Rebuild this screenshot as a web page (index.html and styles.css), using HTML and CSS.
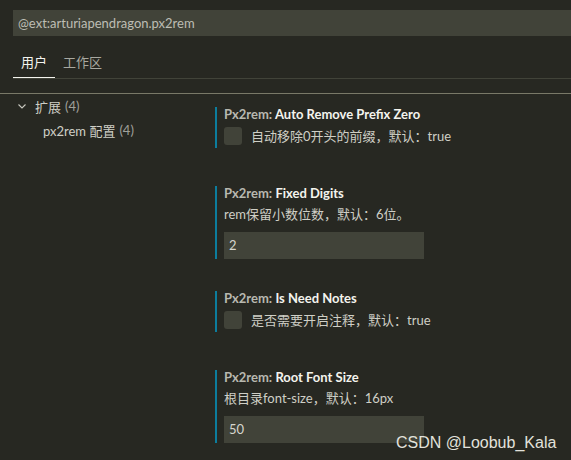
FILE: index.html
```html
<!DOCTYPE html>
<html lang="zh-CN">
<head>
<meta charset="utf-8">
<title>Settings</title>
<link rel="stylesheet" href="styles.css">
</head>
<body>
<div class="page">
  <div class="search">@ext:arturiapendragon.px2rem</div>
  <div class="tabs">
    <div class="tab active">用户</div>
    <div class="tab">工作区</div>
  </div>
  <div class="body">
    <div class="tree">
      <div class="tree-row">
        <svg class="chev" width="16" height="16" viewBox="0 0 16 16"><path d="M4.5 6.5 L8 10 L11.5 6.5" fill="none" stroke="#c8c8c0" stroke-width="1.1"/></svg>
        <span class="tree-label">扩展</span><span class="count">(4)</span>
      </div>
      <div class="tree-row sub">
        <span class="tree-label">px2rem 配置</span><span class="count">(4)</span>
      </div>
    </div>
    <div class="list">
      <div class="setting bool">
        <div class="title"><span class="cat">Px2rem: </span><span class="name">Auto Remove Prefix Zero</span></div>
        <div class="check-row">
          <span class="checkbox"></span>
          <span class="desc">自动移除0开头的前缀，默认：true</span>
        </div>
      </div>
      <div class="setting num">
        <div class="title"><span class="cat">Px2rem: </span><span class="name">Fixed Digits</span></div>
        <div class="desc block">rem保留小数位数，默认：6位。</div>
        <div class="input">2</div>
      </div>
      <div class="setting bool">
        <div class="title"><span class="cat">Px2rem: </span><span class="name">Is Need Notes</span></div>
        <div class="check-row">
          <span class="checkbox"></span>
          <span class="desc">是否需要开启注释，默认：true</span>
        </div>
      </div>
      <div class="setting num">
        <div class="title"><span class="cat">Px2rem: </span><span class="name">Root Font Size</span></div>
        <div class="desc block">根目录font-size，默认：16px</div>
        <div class="input">50</div>
      </div>
    </div>
  </div>
  <div class="watermark">CSDN @Loobub_Kala</div>
</div>
</body>
</html>
```
FILE: styles.css
```css
html, body {
  margin: 0;
  padding: 0;
  background: #272822;
}
.page {
  position: relative;
  width: 571px;
  height: 460px;
  overflow: hidden;
  font-family: Lato, "Noto Sans CJK SC", sans-serif;
  font-size: 13px;
  color: #cfcfc6;
}
.search {
  margin: 10px 0 0 13px;
  height: 26px;
  line-height: 26px;
  background: #414339;
  padding-left: 5px;
  color: #bdbdb4;
  font-size: 13px;
}
.tabs {
  margin: 13px 0 0 13px;
  display: flex;
  border-bottom: 1px solid #414339;
  height: 29px;
}
.tab {
  padding: 0 8px;
  line-height: 26px;
  color: #a8a8a0;
  font-size: 13px;
}
.tab.active {
  color: #f4f4ee;
  border-bottom: 1px solid #f4f4ee;
}
.body {
  margin-top: 14px;
  border-top: 1px solid #797968;
  display: flex;
}
.tree {
  width: 215px;
  flex: none;
}
.tree-row {
  height: 24px;
  display: flex;
  align-items: center;
  padding-left: 14px;
  color: #cfcfc6;
}
.tree-row.sub {
  padding-left: 43px;
}
.chev {
  margin-right: 5px;
}
.count {
  color: #a0a09a;
  margin-left: 4px;
}
.list {
  flex: 1;
  padding-top: 13px;
}
.setting {
  border-left: 2px solid #0c7d9d;
  padding-left: 7px;
}
.setting.bool {
  padding-bottom: 3px;
  margin-bottom: 38px;
}
.setting.num {
  margin-bottom: 32px;
}
.title {
  line-height: 14px;
  font-weight: 700;
  color: #f4f4ee;
}
.cat {
  color: #b8b8b0;
}
.check-row {
  display: flex;
  align-items: center;
  margin-top: 6px;
  height: 18px;
}
.checkbox {
  width: 18px;
  height: 18px;
  border-radius: 3px;
  background: #414339;
  margin-right: 9px;
}
.desc {
  color: #cfcfc6;
  line-height: 18px;
}
.desc.block {
  margin-top: 5px;
}
.input {
  margin-top: 9px;
  width: 195px;
  height: 27px;
  line-height: 27px;
  background: #414339;
  padding-left: 5px;
  color: #d6d6ce;
}
.watermark {
  position: absolute;
  left: 396px;
  top: 433px;
  font-family: "Liberation Sans", Arial, sans-serif;
  font-size: 16px;
  color: #e2e2dc;
  line-height: 20px;
}
```
